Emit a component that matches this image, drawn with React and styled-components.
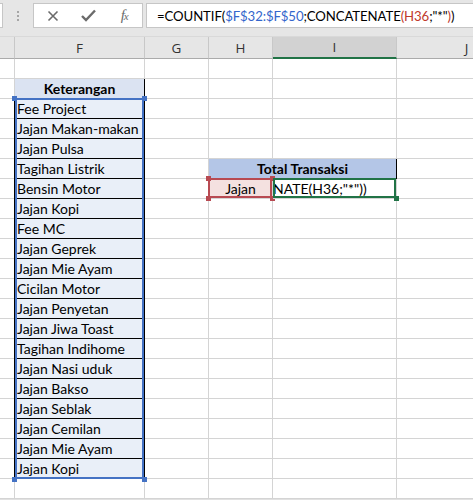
import React from "react";
import styled, { createGlobalStyle } from "styled-components";

const GlobalStyle = createGlobalStyle`
  html, body {
    margin: 0;
    padding: 0;
    background: #fff;
  }
  body {
    width: 473px;
    height: 500px;
    overflow: hidden;
    font-family: "Lato", "Open Sans", sans-serif;
  }
`;

const Window = styled.div`
  width: 473px;
  height: 500px;
  overflow: hidden;
  display: flex;
  flex-direction: column;
  background: #fff;
`;

const FormulaBar = styled.div`
  height: 37px;
  flex: none;
  box-sizing: border-box;
  padding-top: 3px;
  background: #e6e6e6;
  border-bottom: 1px solid #d9d9d9;
  display: flex;
  align-items: flex-start;
`;

const NameBox = styled.div`
  width: 3px;
  height: 25px;
  box-sizing: border-box;
  background: #fff;
  border: 1px solid #c6c6c6;
  border-left: none;
`;

const Grip = styled.div`
  width: 30px;
  height: 25px;
  display: flex;
  flex-direction: column;
  align-items: center;
  justify-content: center;
  gap: 2px;
  span {
    width: 2px;
    height: 2px;
    background: #a6a6a6;
  }
`;

const ButtonBox = styled.div`
  width: 110px;
  height: 25px;
  box-sizing: border-box;
  padding-left: 1px;
  background: #fff;
  border: 1px solid #c6c6c6;
  display: flex;
  align-items: center;
`;

const IconSlot = styled.div`
  width: 36px;
  height: 23px;
  display: flex;
  align-items: center;
  justify-content: center;
  color: #6b6b6b;
`;

const Fx = styled.span`
  font-family: "Liberation Serif", serif;
  font-style: italic;
  font-size: 15px;
  color: #6b6b6b;
  letter-spacing: -1px;
  small {
    font-size: 11px;
  }
`;

const FormulaInput = styled.div`
  flex: 1;
  margin-left: 3px;
  height: 25px;
  box-sizing: border-box;
  padding-left: 10px;
  background: #fff;
  border: 1px solid #c6c6c6;
  border-right: none;
  display: flex;
  align-items: center;
  font-size: 13.2px;
  letter-spacing: -0.1px;
  color: #000;
  white-space: nowrap;
  overflow: hidden;
`;

const Tok = styled.span`
  color: ${(p) => (p.$kind === "ref1" ? "#3366cc" : p.$kind === "ref2" ? "#c0392b" : "#000")};
`;

const Sheet = styled.div`
  display: grid;
  grid-template-columns: 15px 130px 64px 64px 124px 140px;
  grid-template-rows: 22px repeat(22, 20px);
  font-size: 14px;
  color: #000;
`;

const ColHead = styled.div`
  box-sizing: border-box;
  background: ${(p) => (p.$active ? "#d2d2d2" : "#e6e6e6")};
  border-right: 1px solid #c8c8c8;
  border-bottom: ${(p) => (p.$active ? "2px solid #217346" : "1px solid #ababab")};
  display: flex;
  align-items: center;
  justify-content: center;
  font-family: "Open Sans", sans-serif;
  font-size: 13.5px;
  color: #333;
`;

const Cell = styled.div`
  box-sizing: border-box;
  border-right: 1px solid #d4d4d4;
  border-bottom: 1px solid #d4d4d4;
`;

const HeaderCell = styled.div`
  grid-row: ${(p) => p.$row};
  grid-column: ${(p) => p.$col};
  margin: -1px 0 0 -1px;
  box-sizing: border-box;
  border: 1px solid #000;
  background: ${(p) => p.$bg};
  display: flex;
  align-items: center;
  justify-content: center;
  font-weight: 700;
`;

const ListBlock = styled.div`
  grid-row: 4 / span 19;
  grid-column: 2;
  margin-left: -1px;
  position: relative;
  display: flex;
  flex-direction: column;
  border-left: 1px solid #000;
  border-right: 1px solid #000;
  background: #e9eff8;
`;

const ListRow = styled.div`
  height: 20px;
  flex: none;
  box-sizing: border-box;
  padding-left: 2px;
  border-bottom: 1px solid #000;
  display: flex;
  align-items: center;
  white-space: nowrap;
`;

const Frame = styled.div`
  position: absolute;
  top: -1px;
  left: ${(p) => p.$left || 0}px;
  right: 0;
  bottom: 0;
  border: 2px solid ${(p) => p.$color};
  pointer-events: none;
`;

const Handle = styled.div`
  position: absolute;
  width: 5px;
  height: 5px;
  background: ${(p) => p.$color};
  ${(p) => (p.$top ? "top: -3px;" : "bottom: -3px;")}
  ${(p) => (p.$left ? "left: -3px;" : "right: -3px;")}
`;

const ValueCell = styled.div`
  grid-row: ${(p) => p.$row};
  grid-column: ${(p) => p.$col};
  position: relative;
  box-sizing: border-box;
  border-right: 1px solid #d4d4d4;
  border-bottom: 1px solid #d4d4d4;
  background: ${(p) => p.$bg || "#fff"};
  display: flex;
  align-items: center;
  justify-content: ${(p) => (p.$center ? "center" : "flex-start")};
  white-space: nowrap;
  overflow: visible;
`;

const BottomStrip = styled.div`
  flex: 1;
  background: #e1e1e1;
`;

const items = [
  "Fee Project",
  "Jajan Makan-makan",
  "Jajan Pulsa",
  "Tagihan Listrik",
  "Bensin Motor",
  "Jajan Kopi",
  "Fee MC",
  "Jajan Geprek",
  "Jajan Mie Ayam",
  "Cicilan Motor",
  "Jajan Penyetan",
  "Jajan Jiwa Toast",
  "Tagihan Indihome",
  "Jajan Nasi uduk",
  "Jajan Bakso",
  "Jajan Seblak",
  "Jajan Cemilan",
  "Jajan Mie Ayam",
  "Jajan Kopi",
];

const columns = ["", "F", "G", "H", "I", "J"];

// grid rows: 1 = column letters, 2..23 = sheet rows
const occupied = (r, c) =>
  (c === 1 && r >= 3 && r <= 22) || ((c === 3 || c === 4) && (r === 7 || r === 8));

const Corners = ({ color, all = true }) => (
  <>
    {all && <Handle $color={color} $top $left />}
    {all && <Handle $color={color} $top />}
    {all && <Handle $color={color} $left />}
    <Handle $color={color} />
  </>
);

const App = () => {
  const empties = [];
  for (let r = 2; r <= 23; r++) {
    for (let c = 0; c < 6; c++) {
      if (!occupied(r, c)) empties.push(<Cell key={`${r}-${c}`} />);
    }
  }

  return (
    <Window>
      <GlobalStyle />
      <FormulaBar>
        <NameBox />
        <Grip>
          <span />
          <span />
          <span />
        </Grip>
        <ButtonBox>
          <IconSlot>
            <svg width="12" height="12" viewBox="0 0 12 12">
              <path d="M1.5 1.5 L10.5 10.5 M10.5 1.5 L1.5 10.5" stroke="currentColor" strokeWidth="1.6" fill="none" />
            </svg>
          </IconSlot>
          <IconSlot>
            <svg width="15" height="13" viewBox="0 0 15 13">
              <path d="M1 7 L5 11 L14 1.5" stroke="currentColor" strokeWidth="2.4" fill="none" />
            </svg>
          </IconSlot>
          <IconSlot>
            <Fx>
              f<small>x</small>
            </Fx>
          </IconSlot>
        </ButtonBox>
        <FormulaInput>
          <Tok>=COUNTIF(</Tok>
          <Tok $kind="ref1">$F$32:$F$50</Tok>
          <Tok>;CONCATENATE</Tok>
          <Tok $kind="ref2">(H36</Tok>
          <Tok>;"*"</Tok>
          <Tok $kind="ref2">)</Tok>
          <Tok>)</Tok>
        </FormulaInput>
      </FormulaBar>

      <Sheet>
        {columns.map((c) => (
          <ColHead key={c || "corner"} $active={c === "I"}>
            {c}
          </ColHead>
        ))}

        <HeaderCell $row={3} $col={2} $bg="#dbe3f2">
          Keterangan
        </HeaderCell>
        <ListBlock>
          {items.map((t, i) => (
            <ListRow key={i}>{t}</ListRow>
          ))}
          <Frame $color="#4472c4" />
          <Corners color="#4472c4" />
        </ListBlock>

        <HeaderCell $row={7} $col="4 / span 2" $bg="#b4c6e7">
          Total Transaksi
        </HeaderCell>
        <ValueCell $row={8} $col={4} $bg="#f4e1e0" $center>
          Jajan
          <Frame $color="#b84a52" $left={-1} />
          <Corners color="#b84a52" />
        </ValueCell>
        <ValueCell $row={8} $col={5}>
          NATE(H36;"*"))
          <Frame $color="#217346" />
          <Corners color="#217346" all={false} />
        </ValueCell>

        {empties}
      </Sheet>
      <BottomStrip />
    </Window>
  );
};

export default App;
